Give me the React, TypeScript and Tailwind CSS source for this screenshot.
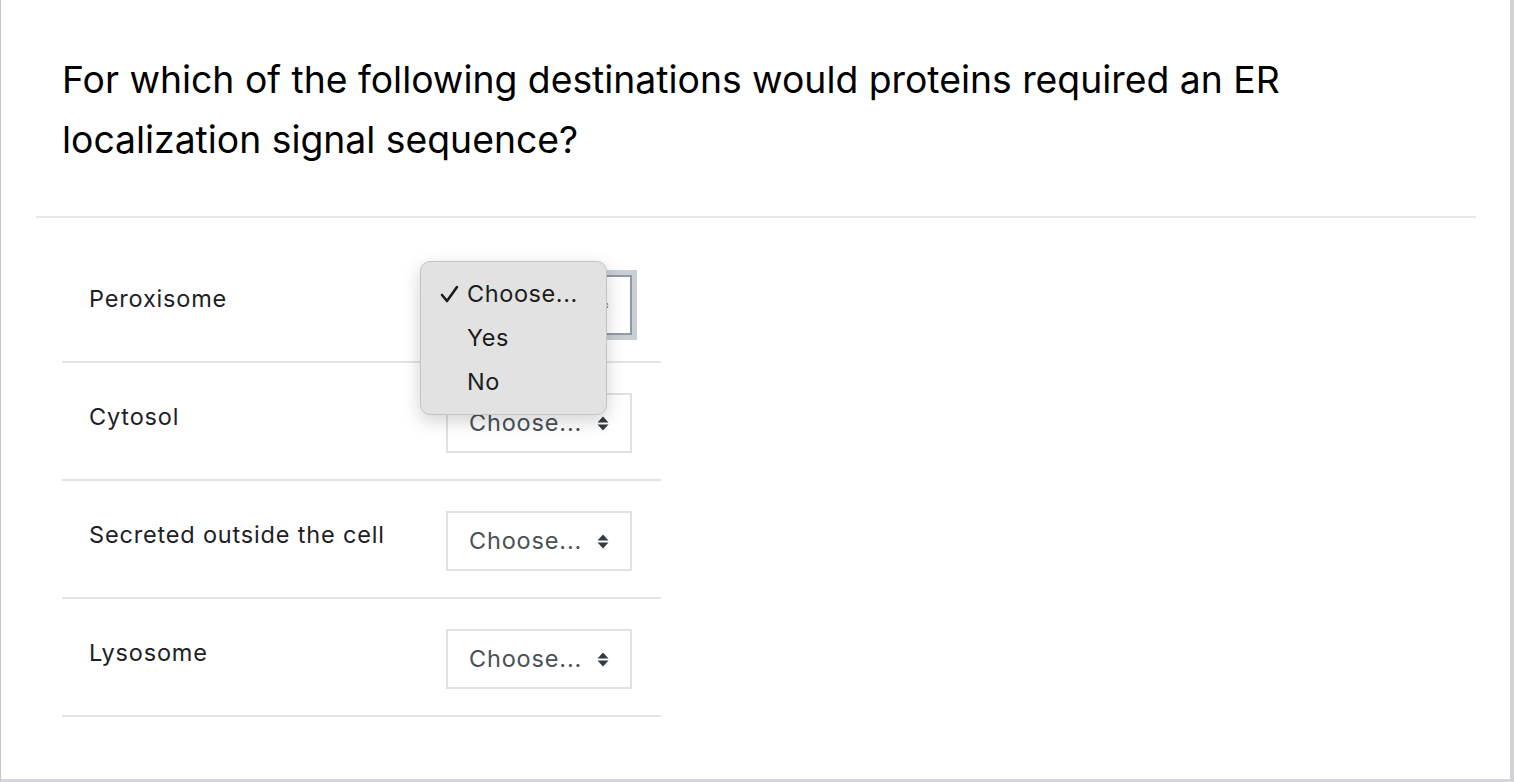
import React from 'react';

const rows = ['Peroxisome', 'Cytosol', 'Secreted outside the cell', 'Lysosome'];

const SortArrows: React.FC = () => (
  <svg width="12" height="15" viewBox="0 0 12 15" className="shrink-0">
    <path d="M6 0.5 L11.5 6.5 L0.5 6.5 Z" fill="#343a40" />
    <path d="M0.5 8.5 L11.5 8.5 L6 14.5 Z" fill="#343a40" />
  </svg>
);

const FakeSelect: React.FC<{ focused?: boolean }> = ({ focused = false }) => (
  <div
    className={`flex h-[60px] w-[186px] items-center justify-between pl-[21px] pr-[21px] text-[23.5px] tracking-[0.035em] text-[#495057] bg-white ${
      focused
        ? 'border-2 border-[#8f9aa6] ring-[5px] ring-[#c9ced4]'
        : 'border-2 border-[#dee2e6]'
    }`}
  >
    <span>Choose...</span>
    <SortArrows />
  </div>
);

const OptionsPopup: React.FC = () => (
  <div className="absolute left-[-26px] top-[-14px] z-10 w-[187px] rounded-[10px] border border-[#c4c4c4] bg-[#e2e2e2] py-[10px] shadow-[0_6px_18px_rgba(0,0,0,0.18)] text-[23.5px] tracking-[0.025em] text-[#1c1c1c]">
    {[
      { label: 'Choose...', checked: true },
      { label: 'Yes', checked: false },
      { label: 'No', checked: false },
    ].map((opt) => (
      <div key={opt.label} className="flex h-[44px] items-center">
        <span className="flex w-[46px] justify-end pr-[8px]">
          {opt.checked && (
            <svg width="19" height="18" viewBox="0 0 19 18">
              <path d="M2 10 L7 16 L17 2" fill="none" stroke="#1c1c1c" strokeWidth="2.6" strokeLinecap="round" strokeLinejoin="round" />
            </svg>
          )}
        </span>
        <span>{opt.label}</span>
      </div>
    ))}
  </div>
);

export default function App() {
  return (
    <div className="h-[782px] w-full overflow-hidden bg-white border-l border-l-[#c6c6c6] border-r-4 border-r-[#d2d2d6] border-b-[3px] border-b-[#d6d6da] font-['Inter','Liberation_Sans',sans-serif]">
      <div className="pl-[35px] pr-[34px]">
        <h1 className="pl-[26px] pr-[180px] pt-[50px] pb-[46px] text-[37.3px] leading-[60px] text-black">
          For which of the following destinations would proteins required an ER localization signal sequence?
        </h1>
        <div className="h-[2px] bg-[#e8e8ec]" />
        <div className="ml-[26px] mt-[27px] w-[599px]">
          {rows.map((label, i) => (
            <div key={label} className="flex border-b-2 border-[#e3e3e6] pt-[30px] pb-[26px]">
              <div className="w-[384px] pl-[27px] pt-[10px] text-[23.5px] tracking-[0.035em] leading-[28px] text-[#1d2125]">
                {label}
              </div>
              <div className="relative">
                <FakeSelect focused={i === 0} />
                {i === 0 && <OptionsPopup />}
              </div>
            </div>
          ))}
        </div>
      </div>
    </div>
  );
}
